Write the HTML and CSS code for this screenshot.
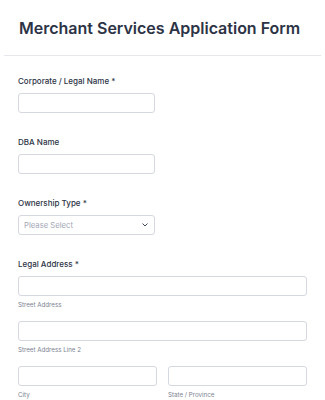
FILE: index.html
```html
<!DOCTYPE html>
<html lang="en">
<head>
    <meta charset="UTF-8">
    <meta name="viewport" content="width=device-width, initial-scale=1.0">
    <title>Merchant Services Application Form</title>
    <link rel="stylesheet" href="styles.css">
</head>
<body>
    <div class="form-header">
        <h1>Merchant Services Application Form</h1>
    </div>

    <form class="form-body">
        <div class="field">
            <label class="field-label">Corporate / Legal Name <span class="req">*</span></label>
            <input class="text-input short" type="text">
        </div>

        <div class="field">
            <label class="field-label">DBA Name</label>
            <input class="text-input short" type="text">
        </div>

        <div class="field">
            <label class="field-label">Ownership Type <span class="req">*</span></label>
            <div class="select-box short">
                <span class="placeholder">Please Select</span>
                <svg class="chevron" width="6" height="4" viewBox="0 0 6 4">
                    <path d="M0.8 0.8 L3 3 L5.2 0.8" fill="none" stroke="#2c3345" stroke-width="0.9" stroke-linecap="round" stroke-linejoin="round"/>
                </svg>
            </div>
        </div>

        <div class="field">
            <label class="field-label">Legal Address <span class="req">*</span></label>
            <div class="address-line">
                <input class="text-input" type="text">
                <div class="sub-label">Street Address</div>
            </div>
            <div class="address-line">
                <input class="text-input" type="text">
                <div class="sub-label">Street Address Line 2</div>
            </div>
            <div class="address-row">
                <div class="address-cell">
                    <input class="text-input" type="text">
                    <div class="sub-label">City</div>
                </div>
                <div class="address-cell">
                    <input class="text-input" type="text">
                    <div class="sub-label">State / Province</div>
                </div>
            </div>
        </div>
    </form>
</body>
</html>
```

FILE: styles.css
```css
* {
    margin: 0;
    padding: 0;
    box-sizing: border-box;
}

body {
    font-family: Inter, 'Noto Sans', sans-serif;
    background: #ffffff;
    color: #2c3345;
}

.form-header {
    margin: 0 4px;
    padding: 18px 15px 16px;
    border-bottom: 1px solid #e6e8ee;
}

h1 {
    font-size: 16px;
    line-height: 21px;
    font-weight: 600;
    color: #2c3345;
}

.form-body {
    padding: 7px 18px 0;
}

.field {
    padding: 12px 0 11px;
}

.field-label {
    display: block;
    font-size: 8px;
    line-height: 12px;
    font-weight: 500;
    color: #2c3345;
    margin-bottom: 6px;
}

.req {
    color: #2c3345;
}

.text-input {
    display: block;
    width: 100%;
    height: 20px;
    border: 1px solid #d5d8e0;
    border-radius: 3px;
    background: #ffffff;
    outline: none;
}

.short {
    width: 137px;
}

.select-box {
    height: 20px;
    border: 1px solid #d5d8e0;
    border-radius: 3px;
    display: flex;
    align-items: center;
    justify-content: space-between;
    padding: 0 6px 0 5px;
}

.placeholder {
    font-size: 7.7px;
    color: #a3a8b5;
}

.address-line {
    margin-bottom: 12px;
}

.sub-label {
    font-size: 6.2px;
    line-height: 9px;
    color: #7b8190;
    margin-top: 4px;
}

.address-row {
    display: flex;
    gap: 11px;
}

.address-cell {
    flex: 1;
}
```
